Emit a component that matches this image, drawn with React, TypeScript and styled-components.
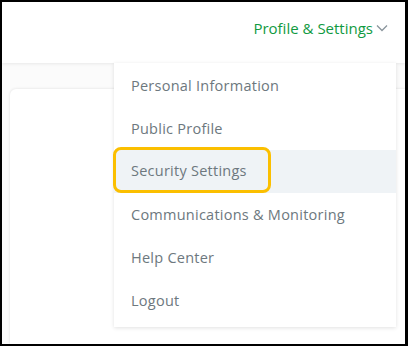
import React from 'react';
import styled, { createGlobalStyle } from 'styled-components';

const GlobalStyle = createGlobalStyle`
  html, body {
    margin: 0;
    padding: 0;
    background: #000;
  }
  * {
    box-sizing: border-box;
  }
`;

const Frame = styled.div`
  width: 408px;
  height: 346px;
  border: solid #000;
  border-width: 2px 3px 2px 2px;
  background: #fbfbfb;
  display: flex;
  flex-direction: column;
  overflow: hidden;
  font-family: 'Open Sans', 'Liberation Sans', sans-serif;
`;

const Header = styled.header`
  height: 61px;
  flex: none;
  background: #fff;
  box-shadow: 0 1px 3px rgba(0, 0, 0, 0.08);
  display: flex;
  align-items: center;
  justify-content: flex-end;
  padding: 0 17px 10px 0;
  position: relative;
  z-index: 2;
`;

const NavToggle = styled.button`
  display: flex;
  align-items: center;
  gap: 3px;
  border: none;
  background: none;
  padding: 0;
  font-family: inherit;
  font-size: 15px;
  color: #119a3f;
  cursor: pointer;
`;

const Main = styled.main`
  flex: 1;
  position: relative;
  padding: 26px 0 0 8px;
`;

const Card = styled.div`
  height: 100%;
  background: #fff;
  border-radius: 6px 0 0 0;
  box-shadow: 0 0 3px rgba(0, 0, 0, 0.12);
`;

const Menu = styled.ul`
  position: absolute;
  top: 0;
  right: 9px;
  width: 282px;
  margin: 0;
  padding: 1px 0 5px;
  list-style: none;
  background: #fff;
  box-shadow: 0 1px 4px rgba(0, 0, 0, 0.12);
  z-index: 3;
`;

const MenuItem = styled.li<{ $active?: boolean }>`
  height: 43px;
  display: flex;
  align-items: center;
  background: ${(p) => (p.$active ? '#eff3f6' : 'transparent')};
`;

const MenuLink = styled.a<{ $focused?: boolean }>`
  display: inline-flex;
  align-items: center;
  height: ${(p) => (p.$focused ? '46px' : '43px')};
  padding: 0 21px 0 15px;
  margin-top: ${(p) => (p.$focused ? '-3px' : '0')};
  margin-left: -1px;
  font-size: 14.5px;
  letter-spacing: 0.25px;
  color: #6d787e;
  text-decoration: none;
  border-radius: 8px;
  border: 3px solid ${(p) => (p.$focused ? '#fbbf00' : 'transparent')};
`;

const Chevron = () => (
  <svg width="12" height="8" viewBox="0 0 12 8" fill="none">
    <path d="M1 1.5l5 5 5-5" stroke="#8a959c" strokeWidth="1.3" />
  </svg>
);

const items = [
  'Personal Information',
  'Public Profile',
  'Security Settings',
  'Communications & Monitoring',
  'Help Center',
  'Logout',
];

const App: React.FC = () => {
  return (
    <>
      <GlobalStyle />
      <Frame>
        <Header>
          <NavToggle>
            Profile &amp; Settings
            <Chevron />
          </NavToggle>
        </Header>
        <Main>
          <Card />
          <Menu>
            {items.map((label) => {
              const focused = label === 'Security Settings';
              return (
                <MenuItem key={label} $active={focused}>
                  <MenuLink href="#" $focused={focused}>
                    {label}
                  </MenuLink>
                </MenuItem>
              );
            })}
          </Menu>
        </Main>
      </Frame>
    </>
  );
};

export default App;
